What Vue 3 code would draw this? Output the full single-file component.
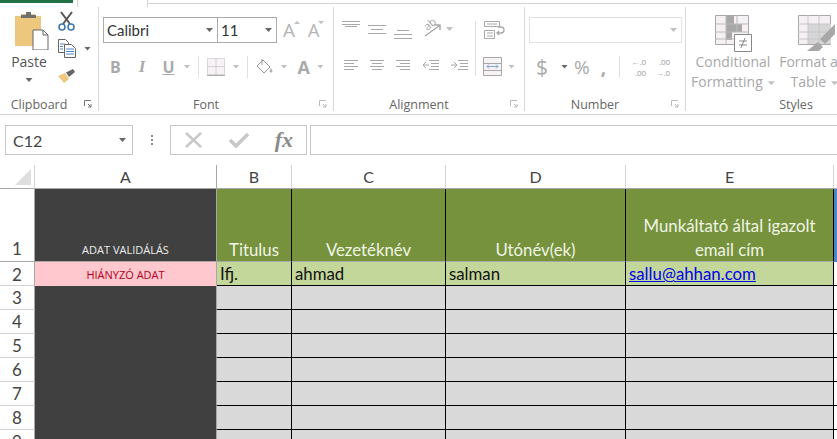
<script setup>
const columns = ['A', 'B', 'C', 'D', 'E']
const emptyRows = [3, 4, 5, 6, 7, 8, 9]
</script>

<template>
  <div class="excel">
    <div class="tabs">
      <div class="file-tab"></div>
      <div class="home-tab"></div>
      <div class="tabs-rest"></div>
    </div>

    <div class="ribbon">
      <!-- clipboard -->
      <section class="group clipboard">
        <div class="group-body clip-body">
          <div class="paste">
            <svg width="36" height="38" viewBox="0 0 36 38">
              <path d="M1 4h6V2h14v2h6v30H1z" fill="#eec77f" />
              <path d="M7 6V3h5V0h5v3h5v3z" fill="#6f6f6f" />
              <path d="M19 18h10l5 5v15H19z" fill="#fff" stroke="#666" />
              <path d="M29 18v5h5" fill="none" stroke="#666" />
            </svg>
            <span class="paste-text">Paste</span>
            <i class="arrow dark"></i>
          </div>
          <div class="clip-tools">
            <svg class="scissors" width="18" height="20" viewBox="0 0 18 20">
              <path d="M3 1l9 12M14 1L5 13" stroke="#555" stroke-width="2" fill="none" />
              <circle cx="4" cy="16" r="3" fill="none" stroke="#3f78b5" stroke-width="1.6" />
              <circle cx="13" cy="16" r="3" fill="none" stroke="#3f78b5" stroke-width="1.6" />
            </svg>
            <div class="copy-row">
              <svg width="18" height="19" viewBox="0 0 18 19">
                <path d="M.5.5h7l3 3v10H.5z" fill="#fff" stroke="#666" />
                <path d="M6.500 5.500h7l4 4v9h-11z" fill="#fff" stroke="#666" />
                <path d="M8 10h8M8 12.500h8M8 15h8" stroke="#4a86c8" />
                <path d="M2 5h5M2 7.500h3M2 10h3" stroke="#4a86c8" />
              </svg>
              <i class="arrow dark"></i>
            </div>
            <svg class="painter" width="18" height="15" viewBox="0 0 18 15">
              <path d="M0 7l7-3 4 6-5 4z" fill="#eec77f" />
              <path d="M8 3.500l7-3.500 2 3-6 5z" fill="#666" />
            </svg>
          </div>
        </div>
        <div class="group-label">Clipboard
          <svg class="launcher" width="8" height="8" viewBox="0 0 8 8"><path d="M.5 6V.5H7M4 4l3 3M7 4v3H4" fill="none" stroke="#777" /></svg>
        </div>
      </section>

      <!-- font -->
      <section class="group font">
        <div class="group-body">
          <div class="row font-top">
            <div class="combo font-name"><span>Calibri</span><i class="arrow dark"></i></div>
            <div class="combo font-size"><span>11</span><i class="arrow dark"></i></div>
            <span class="grow-a up">A</span>
            <span class="grow-a down">A</span>
          </div>
          <div class="row font-bottom">
            <span class="style-btn b">B</span>
            <span class="style-btn it">I</span>
            <span class="style-btn u">U</span>
            <i class="arrow u-arrow"></i>
            <span class="vsep"></span>
            <svg width="18" height="18" viewBox="0 0 18 18">
              <path d="M.5.5h17v16H.5zM9 .5v16M.5 8.500h17" fill="#f6f2f6" stroke="#b8b8b8" stroke-dasharray="1 1" />
              <path d="M0 17.500h18" stroke="#aaa" />
            </svg>
            <i class="arrow"></i>
            <span class="vsep"></span>
            <svg width="17" height="17" viewBox="0 0 17 17">
              <path d="M7 2l7 7-6 6-7-7z" fill="#fff" stroke="#999" />
              <path d="M6 1v6" stroke="#999" />
              <path d="M15 10l1.500 3a1.500 1.500 0 1 1-3 0z" fill="#b0b0b0" />
            </svg>
            <i class="arrow"></i>
            <span class="font-color">A</span>
            <i class="arrow"></i>
          </div>
        </div>
        <div class="group-label">Font
          <svg class="launcher" width="8" height="8" viewBox="0 0 8 8"><path d="M.5 6V.5H7M4 4l3 3M7 4v3H4" fill="none" stroke="#bbb" /></svg>
        </div>
      </section>

      <!-- alignment -->
      <section class="group alignment">
        <div class="group-body align-body">
          <div class="align-left">
            <div class="row align-top">
              <svg class="lines l1" width="18" height="7" viewBox="0 0 18 7"><path d="M0 .5h18M0 3.500h18M3 5.500h12" stroke="#a8a8a8" /></svg>
              <svg class="lines l2" width="18" height="9" viewBox="0 0 18 9"><path d="M0 .5h18M3 4.500h12M0 8.500h18" stroke="#a8a8a8" /></svg>
              <svg class="lines l3" width="18" height="9" viewBox="0 0 18 9"><path d="M3 .5h12M0 4.500h18M0 8.500h18" stroke="#a8a8a8" /></svg>
              <span class="orient"><span class="ab">ab</span><svg width="18" height="14" viewBox="0 0 18 14"><path d="M1 13L15 3M10 2h6v5" fill="none" stroke="#a8a8a8" stroke-width="1.500" /></svg></span>
              <i class="arrow orient-arrow"></i>
            </div>
            <div class="row align-bottom">
              <svg width="14" height="11" viewBox="0 0 14 11"><path d="M0 .5h14M0 3.500h10M0 6.500h14M0 9.500h10" stroke="#a8a8a8" /></svg>
              <svg width="14" height="11" viewBox="0 0 14 11"><path d="M0 .5h14M2 3.500h10M0 6.500h14M2 9.500h10" stroke="#a8a8a8" /></svg>
              <svg width="14" height="11" viewBox="0 0 14 11"><path d="M0 .5h14M4 3.500h10M0 6.500h14M4 9.500h10" stroke="#a8a8a8" /></svg>
              <svg width="17" height="11" viewBox="0 0 17 11"><path d="M7 .5h10M9 3.500h8M9 6.500h8M7 9.500h10M7 5H1M4 2L1 5l3 3" fill="none" stroke="#a8a8a8" /></svg>
              <svg width="17" height="11" viewBox="0 0 17 11"><path d="M7 .5h10M9 3.500h8M9 6.500h8M7 9.500h10M0 5h6M3 2l3 3-3 3" fill="none" stroke="#a8a8a8" /></svg>
            </div>
          </div>
          <span class="align-sep"></span>
          <div class="align-right">
            <svg width="21" height="18" viewBox="0 0 21 18">
              <path d="M.5.5h15v5H.5zM.5 9.500h10v8H.5z" fill="#fff" stroke="#a8a8a8" />
              <path d="M3 3h10M3 12h6M3 15h6" stroke="#a8a8a8" />
              <path d="M13 12h4a3 3 0 0 0 0-6h-3M15 10l-2 2 2 2" fill="none" stroke="#a8a8a8" stroke-width="1.300" />
            </svg>
            <div class="merge-row">
              <svg width="19" height="19" viewBox="0 0 19 19">
                <path d="M.5.5h18v18H.5z" fill="#f6f2f6" stroke="#a8a8a8" />
                <path d="M0 6.500h19M0 13.500h19" stroke="#a8a8a8" />
                <path d="M4 9.500h11M6 7.500l-2 2 2 2M13 7.500l2 2-2 2" fill="none" stroke="#7fa9d4" />
              </svg>
              <i class="arrow"></i>
            </div>
          </div>
        </div>
        <div class="group-label">Alignment
          <svg class="launcher" width="8" height="8" viewBox="0 0 8 8"><path d="M.5 6V.5H7M4 4l3 3M7 4v3H4" fill="none" stroke="#bbb" /></svg>
        </div>
      </section>

      <!-- number -->
      <section class="group number">
        <div class="group-body">
          <div class="row number-top">
            <div class="combo number-combo"><i class="arrow"></i></div>
          </div>
          <div class="row number-bottom">
            <span class="num-sign dollar">$</span>
            <i class="arrow dark"></i>
            <span class="num-sign percent">%</span>
            <span class="num-sign comma">,</span>
            <span class="vsep"></span>
            <span class="decimal"><span>←.0</span><span>.00</span></span>
            <span class="decimal"><span>.00</span><span>→.0</span></span>
          </div>
        </div>
        <div class="group-label">Number
          <svg class="launcher" width="8" height="8" viewBox="0 0 8 8"><path d="M.5 6V.5H7M4 4l3 3M7 4v3H4" fill="none" stroke="#bbb" /></svg>
        </div>
      </section>

      <!-- styles -->
      <section class="group styles">
        <div class="group-body style-items">
          <div class="style-item cond">
            <svg width="37" height="37" viewBox="0 0 37 37">
              <path d="M.5.5h33v29H.5z" fill="#f4f0f4" stroke="#a8a8a8" />
              <path d="M11 1h8v8H11zM11 9h16v8H11zM11 17h6v8H11z" fill="#a8a8a8" />
              <path d="M11 0v29M22 0v17M0 9h34M0 17h34M0 24h22" stroke="#bbb" />
              <path d="M19.500 19.500h17v17h-17z" fill="#fff" stroke="#888" />
              <path d="M24 26h8M24 30h8M30 23l-4 10" stroke="#888" />
            </svg>
            <span>Conditional</span>
            <span>Formatting<i class="arrow"></i></span>
          </div>
          <div class="style-item table">
            <svg width="37" height="37" viewBox="0 0 37 37">
              <path d="M.5.5h32v29H.5z" fill="#f4f0f4" stroke="#a8a8a8" />
              <path d="M10 9h23v20H10z" fill="#d6d6d6" />
              <path d="M10 0v29M21 0v29M0 9h33M0 17h33M0 24h33" stroke="#c6c6c6" />
              <path d="M37 9L22 24l5 5 10-10z" fill="#a8a8a8" />
              <path d="M20 27l5 5-4 4H9z" fill="#a8a8a8" />
            </svg>
            <span>Format as</span>
            <span class="table-word">Table<i class="arrow"></i></span>
          </div>
        </div>
        <div class="group-label styles-label">Styles</div>
      </section>
    </div>

    <div class="formula-bar">
      <div class="name-box"><span>C12</span><i class="arrow dark"></i></div>
      <div class="dots"><i></i><i></i><i></i></div>
      <div class="fx-box">
        <svg width="20" height="18" viewBox="0 0 20 18"><path d="M2 2l15 14M17 2L2 16" stroke="#c8c8c8" stroke-width="2.400" /></svg>
        <svg width="20" height="18" viewBox="0 0 20 18"><path d="M1 9l6 6L19 3" fill="none" stroke="#c8c8c8" stroke-width="3.500" /></svg>
        <span class="fx">fx</span>
      </div>
      <div class="formula-input"></div>
    </div>

    <div class="sheet">
      <div class="corner"><i></i></div>
      <div v-for="col in columns" :key="col" class="col-head">{{ col }}</div>
      <div class="col-head last"></div>

      <div class="row-head r1">1</div>
      <div class="cell dark validate"><span>ADAT VALIDÁLÁS</span></div>
      <div class="cell title"><span>Titulus</span></div>
      <div class="cell title"><span>Vezetéknév</span></div>
      <div class="cell title"><span>Utónév(ek)</span></div>
      <div class="cell title"><span>Munkáltató által igazolt<br />email cím</span></div>
      <div class="cell blue"></div>

      <div class="row-head r2">2</div>
      <div class="cell missing">HIÁNYZÓ ADAT</div>
      <div class="cell data">Ifj.</div>
      <div class="cell data">ahmad</div>
      <div class="cell data">salman</div>
      <div class="cell data"><a class="mail">sallu@ahhan.com</a></div>
      <div class="cell blank"></div>

      <template v-for="n in emptyRows" :key="n">
        <div class="row-head">{{ n }}</div>
        <div class="cell dark"></div>
        <div class="cell gray"></div>
        <div class="cell gray"></div>
        <div class="cell gray"></div>
        <div class="cell gray"></div>
        <div class="cell blank"></div>
      </template>
    </div>
  </div>
</template>

<style scoped>
.excel {
  width: 837px;
  height: 439px;
  overflow: hidden;
  background: #fff;
  font-family: "Open Sans", "Noto Sans", sans-serif;
  color: #444;
}

.tabs {
  display: flex;
  height: 7px;
}
.file-tab {
  width: 73px;
  height: 3px;
  background: #217346;
}
.home-tab {
  width: 69px;
  margin-left: 4px;
  border-left: 1px solid #d4d4d4;
  border-right: 1px solid #d4d4d4;
}
.tabs-rest {
  flex: 1;
  height: 3px;
  border-bottom: 1px solid #d4d4d4;
}

.ribbon {
  display: flex;
  height: 107px;
  border-bottom: 1px solid #d4d4d4;
}
.group {
  display: flex;
  flex-direction: column;
  box-sizing: border-box;
  height: 104px;
  border-right: 1px solid #d9d9d9;
  flex-shrink: 0;
}
.group-body {
  height: 91px;
}
.group-label {
  position: relative;
  box-sizing: border-box;
  padding-right: 20px;
  text-align: center;
  font-size: 12.500px;
  line-height: 13px;
  color: #666;
}
.clipboard { width: 99px; }
.font { width: 235px; }
.alignment { width: 191px; }
.number { width: 161px; }
.styles { width: 151px; border-right: 0; }

.row {
  display: flex;
  align-items: center;
}

.arrow {
  display: inline-block;
  flex-shrink: 0;
  width: 7px;
  height: 4px;
  background: #c0c0c0;
  clip-path: polygon(0 0, 100% 0, 50% 100%);
}
.arrow.dark {
  background: #666;
}
.launcher {
  position: absolute;
  right: 6px;
  top: 2px;
}

.clip-body {
  display: flex;
}
.paste {
  width: 58px;
  display: flex;
  flex-direction: column;
  align-items: center;
  padding-top: 5px;
}
.paste svg {
  margin-left: 6px;
}
.paste-text {
  font-size: 14px;
  line-height: 18px;
  margin-top: 3px;
  color: #555;
}
.paste .arrow {
  margin-top: 7px;
}
.clip-tools {
  display: flex;
  flex-direction: column;
  align-items: flex-start;
  padding-top: 4px;
}
.copy-row {
  display: flex;
  align-items: center;
  gap: 8px;
  margin-top: 8px;
}
.painter {
  margin-top: 11px;
}

.font-top {
  padding: 10px 0 0 4px;
}
.combo {
  box-sizing: border-box;
  height: 26px;
  border: 1px solid #ababab;
  display: flex;
  align-items: center;
  justify-content: space-between;
  padding: 0 4px 0 3px;
  font-family: "Lato", sans-serif;
  font-size: 15px;
  color: #333;
}
.font-name {
  width: 115px;
}
.font-size {
  width: 60px;
  margin-left: -1px;
}
.grow-a {
  font-size: 19px;
  line-height: 20px;
  color: #b4b4b4;
  position: relative;
}
.grow-a::after {
  content: "";
  position: absolute;
  right: -5px;
  width: 0;
  height: 0;
  border-left: 3px solid transparent;
  border-right: 3px solid transparent;
}
.grow-a.up::after {
  top: 1px;
  border-bottom: 3px solid #c0c0c0;
}
.grow-a.down::after {
  top: 1px;
  border-top: 3px solid #c0c0c0;
}
.grow-a.up {
  margin-left: 6px;
}
.grow-a.down {
  margin-left: 13px;
  font-size: 18px;
}
.font-bottom {
  padding: 10px 0 0 11px;
  height: 27px;
}
.style-btn {
  font-size: 16px;
  color: #aaa;
  line-height: 20px;
}
.style-btn.b {
  font-weight: 700;
}
.style-btn.it {
  margin-left: 18px;
  font-style: italic;
  font-weight: 700;
  font-family: "Liberation Serif", serif;
  font-size: 17px;
}
.style-btn.u {
  margin-left: 17px;
  font-weight: 700;
  text-decoration: underline;
}
.vsep {
  display: inline-block;
  width: 1px;
  height: 22px;
  background: #e0e0e0;
}
.font-bottom .arrow {
  margin-left: 7px;
}
.font-bottom .u-arrow {
  margin-left: 9px;
}
.font-bottom .vsep {
  margin: 0 8px 0 8px;
}
.font-color {
  margin: 0 0 0 10px;
  font-size: 18px;
  font-weight: 700;
  color: #aaa;
}

.align-body {
  display: flex;
}
.align-left {
  width: 141px;
}
.align-top {
  height: 36px;
  padding: 7px 0 0 8px;
  align-items: flex-start;
}
.lines {
  margin-right: 8px;
}
.l1 { margin-top: 7px; }
.l2 { margin-top: 11px; }
.l3 { margin-top: 16px; }
.orient {
  position: relative;
  width: 18px;
  height: 22px;
  margin: 6px 0 0 3px;
}
.ab {
  position: absolute;
  left: 0;
  top: -4px;
  font-size: 11px;
  transform: rotate(-40deg);
  color: #a8a8a8;
}
.orient svg {
  position: absolute;
  left: 1px;
  top: 3px;
}
.orient-arrow {
  margin: 13px 0 0 5px;
}
.align-bottom {
  padding: 5px 0 0 10px;
  gap: 12px;
  height: 20px;
}
.align-sep {
  width: 1px;
  height: 55px;
  margin-top: 14px;
  background: #e0e0e0;
}
.align-right {
  display: flex;
  flex-direction: column;
  padding: 14px 0 0 8px;
}
.merge-row {
  display: flex;
  align-items: center;
  gap: 6px;
  margin: 18px 0 0 -1px;
}

.number-top {
  padding: 10px 0 0 4px;
}
.number-combo {
  width: 153px;
  border-color: #e2e2e2;
  justify-content: flex-end;
}
.number-bottom {
  padding: 10px 0 0 11px;
  height: 27px;
}
.num-sign {
  color: #aaa;
  font-size: 19px;
}
.dollar {
  font-size: 21px;
}
.number-bottom .arrow {
  margin-left: 13px;
}
.percent {
  margin-left: 6px;
}
.comma {
  margin-left: 11px;
  font-weight: 700;
}
.number-bottom .vsep {
  margin: 0 9px 0 13px;
}
.decimal {
  display: flex;
  flex-direction: column;
  align-items: flex-end;
  font-size: 8px;
  line-height: 11px;
  color: #999;
  width: 17px;
  margin-right: 7px;
  white-space: nowrap;
}

.style-items {
  display: flex;
}
.style-item {
  display: flex;
  flex-direction: column;
  align-items: center;
  font-size: 14px;
  line-height: 20px;
  color: #a8a8a8;
  padding-top: 8px;
  white-space: nowrap;
}
.style-item .arrow {
  margin-left: 5px;
  vertical-align: middle;
}
.cond {
  width: 88px;
  margin-left: 5px;
}
.cond svg {
  margin-left: 1px;
}
.table {
  width: 62px;
  margin-left: 6px;
}
.table svg {
  margin-left: 9px;
}
.table-word {
  margin-left: 5px;
}
.styles-label {
  width: 220px;
  padding-right: 0;
}

.formula-bar {
  display: flex;
  height: 50px;
  padding: 10px 0 0 5px;
  box-sizing: border-box;
}
.name-box {
  box-sizing: border-box;
  width: 128px;
  height: 30px;
  border: 1px solid #c6c6c6;
  display: flex;
  align-items: center;
  justify-content: space-between;
  padding: 0 6px 0 7px;
  font-family: "Lato", sans-serif;
  font-size: 16px;
  color: #444;
}
.dots {
  width: 37px;
  height: 30px;
  display: flex;
  flex-direction: column;
  align-items: center;
  justify-content: center;
  gap: 2px;
}
.dots i {
  width: 2px;
  height: 2px;
  background: #8a8a8a;
}
.fx-box {
  box-sizing: border-box;
  width: 137px;
  height: 30px;
  border: 1px solid #c6c6c6;
  display: flex;
  align-items: center;
  justify-content: space-between;
  padding: 0 13px 0 13px;
}
.fx {
  font-family: "Liberation Serif", serif;
  font-style: italic;
  font-weight: 700;
  font-size: 22px;
  line-height: 22px;
  color: #8a8a8a;
}
.formula-input {
  flex: 1;
  height: 30px;
  margin-left: 3px;
  box-sizing: border-box;
  border: 1px solid #c6c6c6;
  border-right: 0;
}

.sheet {
  display: grid;
  grid-template-columns: 35px 182px 75px 154px 180px 208px 3px;
  grid-template-rows: 24px 73px repeat(8, 24px);
  font-family: "Lato", sans-serif;
}
.corner {
  box-sizing: border-box;
  border-right: 1px solid #d4d4d4;
  border-bottom: 1px solid #a8a8a8;
  position: relative;
}
.corner i {
  position: absolute;
  right: 3px;
  bottom: 3px;
  width: 0;
  height: 0;
  border-left: 16px solid transparent;
  border-bottom: 16px solid #dfdfdf;
}
.col-head {
  box-sizing: border-box;
  border-right: 1px solid #d4d4d4;
  border-bottom: 1px solid #a8a8a8;
  text-align: center;
  font-size: 16px;
  line-height: 23px;
  color: #444;
}
.col-head:nth-child(2) {
  border-right-color: #a8a8a8;
}
.col-head.last {
  border-right: 0;
}
.row-head {
  box-sizing: border-box;
  border-right: 1px solid #a8a8a8;
  border-bottom: 1px solid #d4d4d4;
  text-align: center;
  font-size: 17px;
  line-height: 23px;
  color: #444;
}
.row-head.r1 {
  line-height: 20px;
  padding-top: 50px;
  border-bottom-color: #a8a8a8;
}
.row-head.r2 {
  line-height: 26px;
}
.cell {
  box-sizing: border-box;
  border-right: 1px solid #000;
  border-bottom: 1px solid #000;
  font-size: 16.800px;
  color: #111;
}
.dark {
  background: #404040;
  border-right-color: #a8a8a8;
  border-bottom-color: #404040;
}
.validate {
  display: flex;
  align-items: flex-end;
  justify-content: center;
  padding-bottom: 4px;
  font-family: "Open Sans", sans-serif;
  font-size: 11px;
  color: #eee;
  border-bottom-color: #a8a8a8;
}
.title {
  background: #76923c;
  color: #f0f5e6;
  display: flex;
  align-items: flex-end;
  justify-content: center;
  text-align: center;
  line-height: 24px;
  border-bottom-color: #a8a8a8;
}
.title span {
  margin-bottom: -1px;
}
.blue {
  background: #4a86c8;
  border: 0;
}
.missing {
  background: #ffc7ce;
  color: #b00020;
  font-family: "Open Sans", sans-serif;
  font-size: 11px;
  line-height: 26px;
  text-align: center;
  border-right-color: #a8a8a8;
  border-bottom-color: #ffc7ce;
}
.data {
  background: #c4d79b;
  padding-left: 3px;
  line-height: 23px;
}
.mail {
  color: #0000ee;
  text-decoration: underline;
}
.gray {
  background: #d9d9d9;
}
.blank {
  border-right: 0;
}
</style>

<style>
html, body {
  margin: 0;
  background: #fff;
}
</style>
